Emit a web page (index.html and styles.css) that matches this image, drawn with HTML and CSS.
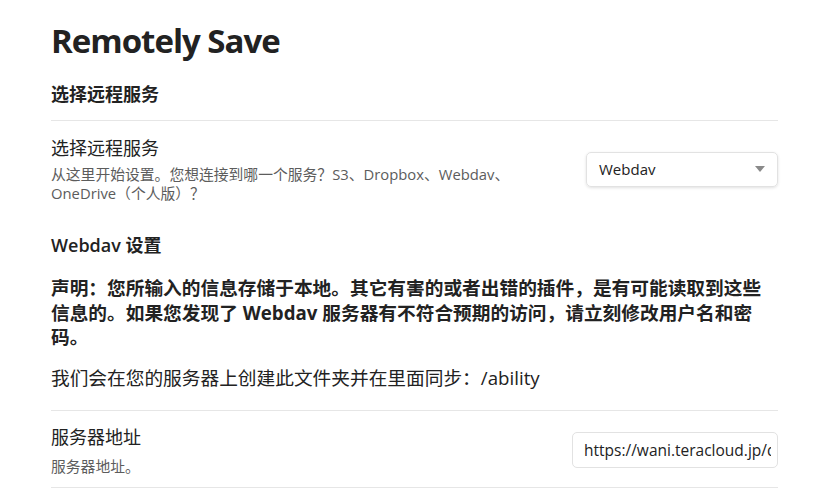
FILE: index.html
```html
<!DOCTYPE html>
<html lang="zh-CN">
<head>
  <meta charset="UTF-8">
  <meta name="viewport" content="width=device-width, initial-scale=1.0">
  <title>Remotely Save</title>
  <link rel="stylesheet" href="styles.css">
</head>
<body>
  <div class="settings">
    <h1 class="plugin-title">Remotely Save</h1>
    <h3 class="section-title">选择远程服务</h3>

    <div class="setting-item">
      <div class="setting-info">
        <div class="setting-name">选择远程服务</div>
        <div class="setting-desc">从这里开始设置。您想连接到哪一个服务？S3、Dropbox、Webdav、OneDrive（个人版）？</div>
      </div>
      <div class="setting-control">
        <div class="dropdown">
          <span>Webdav</span>
          <svg class="dropdown-arrow" viewBox="0 0 10 6"><polygon points="0,0 10,0 5,6"></polygon></svg>
        </div>
      </div>
    </div>

    <div class="group-title">Webdav 设置</div>
    <p class="notice">声明：您所输入的信息存储于本地。其它有害的或者出错的插件，是有可能读取到这些信息的。如果您发现了 Webdav 服务器有不符合预期的访问，请立刻修改用户名和密码。</p>
    <p class="note">我们会在您的服务器上创建此文件夹并在里面同步：/ability</p>

    <div class="setting-item bordered">
      <div class="setting-info">
        <div class="setting-name">服务器地址</div>
        <div class="setting-desc">服务器地址。</div>
      </div>
      <div class="setting-control">
        <input class="text-input" type="text" value="https://wani.teracloud.jp/dav/">
      </div>
    </div>
  </div>
</body>
</html>
```

FILE: styles.css
```css
* {
  margin: 0;
  padding: 0;
  box-sizing: border-box;
}

body {
  background: #ffffff;
  color: #222222;
  font-family: "Open Sans", "Noto Sans CJK SC", sans-serif;
  overflow: hidden;
}

.settings {
  padding: 18px 51px 0 51px;
}

.plugin-title {
  font-size: 33px;
  font-weight: 700;
  line-height: 46px;
  letter-spacing: -1px;
}

.section-title {
  font-size: 18px;
  font-weight: 700;
  line-height: 24px;
  margin-top: 18px;
  padding-bottom: 14px;
  border-bottom: 1px solid #e6e6e6;
}

.setting-item {
  display: flex;
  align-items: center;
  justify-content: space-between;
  gap: 24px;
  padding: 14px 0 12px;
}

.setting-item.bordered {
  border-top: 1px solid #e6e6e6;
  border-bottom: 1px solid #e6e6e6;
  margin-top: 20px;
  padding: 13px 0 11px;
}

.setting-item.bordered .setting-desc {
  margin-top: 7px;
}

.setting-info {
  flex: 1;
}

.setting-name {
  font-size: 18px;
  line-height: 26px;
}

.setting-desc {
  font-size: 14.8px;
  line-height: 19px;
  color: #5c5c5c;
  max-width: 470px;
  margin-top: 4px;
}

.dropdown {
  width: 192px;
  height: 35px;
  border: 1px solid #e2e2e2;
  border-radius: 5px;
  box-shadow: 0 1px 3px rgba(0, 0, 0, 0.12);
  display: flex;
  align-items: center;
  justify-content: space-between;
  padding: 0 12px 0 12px;
  font-size: 15px;
}

.dropdown-arrow {
  width: 10px;
  height: 6px;
  fill: #8a8a8a;
}

.group-title {
  font-size: 18px;
  font-weight: 600;
  line-height: 26px;
  margin-top: 17px;
}

.notice {
  font-size: 18.7px;
  font-weight: 700;
  line-height: 24.5px;
  margin-top: 18px;
}

.note {
  font-size: 18.7px;
  line-height: 25px;
  margin-top: 15px;
}

.text-input {
  width: 206px;
  height: 36px;
  border: 1px solid #e2e2e2;
  border-radius: 5px;
  padding: 0 6px 0 11px;
  font-family: "Open Sans", "Noto Sans CJK SC", sans-serif;
  font-size: 15.5px;
  color: #222222;
  background: #ffffff;
  outline: none;
}
```
